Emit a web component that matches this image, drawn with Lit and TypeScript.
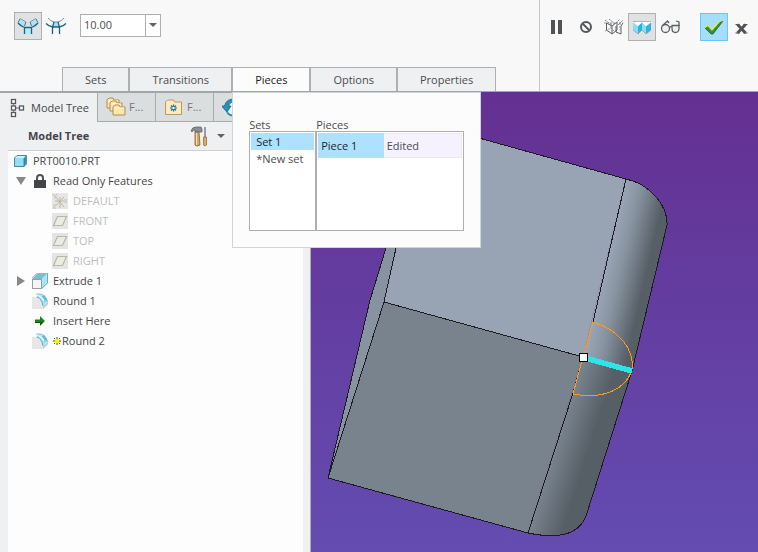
import { LitElement, html, css, svg, nothing } from "lit";
import type { TemplateResult } from "lit";
import { customElement, state } from "lit/decorators.js";
import { classMap } from "lit/directives/class-map.js";

const icon = (size: number, body: unknown, width = size) =>
  html`<svg class="icon" width=${width} height=${size} viewBox="0 0 ${width} ${size}" aria-hidden="true">${body}</svg>`;

/* Toolbar glyphs, 26 x 26 */
const setMode = icon(26, svg`
  <path d="M5 7 L11 9.500 L8.500 13.500 L3.500 10 Z M21 7 L15 9.500 L17.500 13.500 L22.500 10 Z" fill="#a5e3f7"/>
  <rect x="9" y="14" width="8" height="7" fill="#b4ebfa"/>
  <path d="M5 5.500 L11 9 M21 5.500 L15 9" stroke="#7e9aa6" fill="none"/>
  <path d="M3 9.500 L5 6 M23 9.500 L21 6 M11 9 L9.500 13 M15 9 L16.500 13" stroke="#2c7e9b" fill="none"/>
  <path d="M3 10 Q5.500 13 9.500 14.500 H16.500 Q20.500 13 23 10 M9.500 14 V21 M16.500 14 V21" stroke="#1b6380" stroke-width="1.300" fill="none"/>`);
const transitionMode = icon(26, svg`
  <path d="M11 9 H15 L17 14 H9 Z" fill="#a5e3f7"/>
  <path d="M5 5 Q8 8.500 11 9 H15 Q18 8.500 21 5" stroke="#6f94a3" fill="none"/>
  <path d="M3 10.500 Q6 13.500 9.500 14 H16.500 Q20 13.500 23 10.500 M11 9 L9.500 14 V21 M15 9 L16.500 14 V21" stroke="#1b6380" stroke-width="1.300" fill="none"/>`);
const pause = icon(26, svg`<path d="M6 6h4v14H6z M13 6h4v14h-4z" fill="#505356"/>`);
const noPreview = icon(26, svg`
  <circle cx="13" cy="13" r="5" fill="none" stroke="#55585b" stroke-width="2"/>
  <path d="M9.500 9.500 L16.500 16.500" stroke="#55585b" stroke-width="2"/>`);
const wire = icon(26, svg`
  <g fill="none" stroke="#5b5e61">
    <path d="M5.500 9 L11 12 V20 L5.500 16 Z M11 12 L16 8 V16 L11 20 M15 12 V18 L20 20 V12 L22 9"/>
    <path d="M3 9 H22 M4 17 L10 14 L14 18 M10 9 V14 M19 9 V16" stroke-dasharray="2 1" stroke="#94979a"/>
    <path d="M4 6 L12 12 M8 5 L14 10 L19 5 M15 13 L22 6" stroke-dasharray="2 1" stroke="#7c7f82"/>
  </g>`);
const shaded = icon(26, svg`
  <path d="M5 9 L8 7 H13 L9 12 Z M13 9 L16 7 H22 L18 12 Z" fill="#fff"/>
  <path d="M4 8 L9 12 V20 L4 16 Z" fill="#8adcf7"/><path d="M9 12 L13 8 V16 L9 20 Z" fill="#2cb2e6"/>
  <path d="M13 8 L17 12 V20 L13 16 Z" fill="#8adcf7"/><path d="M17 12 L22 8 V16 L17 20 Z" fill="#2cb2e6"/>
  <path d="M4 7.500 H22 M4 16 L9 20 L13 16 L17 20 L22 16" stroke="#8b999f" fill="none" stroke-width=".7"/>
  <path d="M4 8 L9 12 L13 8 L17 12 L22 8" stroke="#e9f8fd" fill="none"/>`);
const glasses = icon(26, svg`
  <g fill="#eef1f2" stroke="#5d6063" stroke-width="1.300">
    <circle cx="8.500" cy="14.500" r="4"/><path d="M15 11.500 H22 V15 Q21.500 18.500 18.500 18.500 Q15 18.500 15 14.500 Z"/>
    <path d="M5 12 L10.500 7 L12 9 M12.500 13.500 Q13.500 12 15 13 M22 12 V8 L19 7" fill="none"/>
  </g>`);
const check = icon(26, svg`
  <path d="M4 14 L7 12 L11 17 L19 8 L22 7 L12 20 H10 Z" fill="#2f8f4e" stroke="#235c33" stroke-width=".8"/>
  <path d="M4 13.500 L7 11.500 L11 16 L18.500 7.500 L22 6.500" fill="none" stroke="#e4f01c" stroke-width="1.200"/>`);
const cancel = icon(26, svg`
  <path d="M8.500 10.500 L16.500 19 M16.500 10.500 L8.500 19" stroke="#505356" stroke-width="3"/>
  <path d="M6.500 10.500h4 M14.500 10.500h4 M6.500 19h4 M14.500 19h4" stroke="#505356"/>`);
const caret = icon(4, svg`<path d="M0 0h8L4 4z" fill="#606366"/>`, 8);

/* Navigator tab glyphs */
const treeTab = icon(20, svg`
  <g fill="#fff" stroke="#55585b" stroke-width="1.300"><path d="M3.500 5v10M3.500 10h7" stroke="#8c8f92"/>
  <rect x="1.500" y="1.500" width="4" height="4"/><rect x="1.500" y="8" width="4" height="4"/>
  <rect x="1.500" y="14.500" width="4" height="4"/><rect x="9.500" y="8" width="4" height="4"/></g>`, 16);
const folderShape = (x: number, y: number) => svg`
  <path d="M${x} ${y + 10}v-8q0-1 1-1l1-1h4l1 2h5v8z" fill="#fbe6ae" stroke="#b28c4e"/>
  <path d="M${x + 1} ${y + 3}h10" stroke="#fff8e0"/>`;
const folders = icon(20, svg`${folderShape(1, 1)}${folderShape(4, 4)}${folderShape(7, 8)}`);
const favorite = icon(20, svg`
  <path d="M1.500 17.500V5l1-1 1-1h6l1 2h7v12.500z" fill="#fcebc0" stroke="#b99a5f"/>
  <path d="M9.500 7.500v7M6 11h7M7 8.500l5 5M12 8.500l-5 5" stroke="#1d6c8b" stroke-width="1.200"/><circle cx="9.500" cy="11" r="1.200" fill="#fff"/>`);
const history = icon(20, svg`
  <circle cx="11" cy="10" r="7" fill="#f4f9fb"/>
  <path d="M15 2 Q4 1 2.500 9 L-.5 9 L5 15 L9 9 L6.500 9 Q8 4 15 5 Z" fill="#2791c0" stroke="#145f80" stroke-width=".8"/>
  <path d="M5 15 Q8 20 15 18" fill="none" stroke="#2787b0" stroke-width="1.500"/>`);
const tools = icon(22, svg`
  <path d="M1 6 Q2 2 6 2 H11 L12 4 V7 H5 V5 Q3 5 2 7 Z" fill="#8b8f94" stroke="#595c60" stroke-width=".7"/>
  <path d="M5 7h4l1 13q-3 2-5 0z" fill="#d6a766" stroke="#7a5a32" stroke-width=".8"/><path d="M6.500 8v12" stroke="#f6ddb0"/>
  <path d="M15 2v10" stroke="#7c8084" stroke-width="1.500"/>
  <path d="M13.500 12h3v8q-1.500 2-3 0z" fill="#e0ac63" stroke="#84602e" stroke-width=".7"/>`, 18);

/* Model tree glyphs, 16 x 16 */
const part = icon(16, svg`
  <path d="M2 5 L5 2 H14 L12 5 Z" fill="#c6f1fd"/><path d="M12 5 L14 2 V11 L12 14 Z" fill="#2b97c0"/>
  <rect x="2" y="5" width="10" height="9" fill="#93def6"/>
  <path d="M2.500 5 L5 2.500 H14.500 V11 L12 13.500 H2.500 Z M12 5 V13" fill="none" stroke="#33718b" stroke-width=".8"/>`);
const lock = icon(16, svg`
  <path d="M5 7V5q0-3 3-3t3 3v2" fill="none" stroke="#4f5255" stroke-width="2"/>
  <path d="M2 7h12v8H2z" fill="#434649"/>`);
const csys = icon(16, svg`
  <rect width="16" height="16" fill="#e6e6e6"/>
  <path d="M8 4v11M3 8h9M3.500 13L12 4M4 4L12 14" stroke="#bbb8a4" fill="none"/>
  <path d="M1 1l2 3 2-3M3 4v2M12 6l3 4M15 6l-3 4M1 12h3l-3 3h3" stroke="#c6c3b2" fill="none"/>`);
const plane = icon(16, svg`
  <rect width="16" height="16" fill="#e4e4e4"/>
  <path d="M1.500 12.500 L5.500 3.500 H14.500 L10.500 12.500 Z" fill="#ebebe6" stroke="#b9b7a6" stroke-width="1.200"/>`);
const extrude = icon(16, svg`
  <path d="M0 6 L6 0 H16 L10 6 Z" fill="#7fbcd4"/><path d="M10 6 L16 0 V10 L10 16 Z" fill="#a8e5f8"/>
  <path d="M0 5 L5 0 H15" stroke="#b4b9bc" fill="none"/><path d="M10 15 L15.500 10 V0" stroke="#71a9bd" fill="none"/>
  <rect x=".5" y="6.500" width="9" height="9" fill="#f5f5f5" stroke="#9b9ea1"/>`);
const round = icon(16, svg`
  <path d="M0 4 H4 Q11 6 11 16 H0 Z" fill="#e6e6e6"/>
  <path d="M11 14 L16 9 V11 L11 16 Z" fill="#bfc2c4"/>
  <path d="M4 4 L7 1 Q14 1 16 9 L11 14 Q10 5 4 4 Z" fill="#a9e6fa"/>
  <path d="M9 4 L12 2 Q14 4 15 7 L12 9 Q11 6 9 4 Z" fill="#5cc0e6"/><path d="M7 3 Q10 4 12 8" stroke="#e9fbff" stroke-width="1.500" fill="none"/>
  <path d="M5 4 Q10 5.500 11 13" stroke="#63a9c4" fill="none"/><path d="M4 1 H8 Q14 1.500 15.500 9" stroke="#7cb3c8" stroke-width=".8" fill="none"/>`);
const insertArrow = icon(16, svg`
  <path d="M3 6.500 H8 V3 L13 8 L8 13 V10 H3 Z" fill="#12861a"/><path d="M3 9 H12 L8 13 V10 H3 Z" fill="#1d4f16"/>
  <path d="M8 13 L13 8" stroke="#c9d414" stroke-width=".8"/>`);
const fresh = icon(8, svg`
  <path d="M4 0v8M0 4h8M1 1l6 6M7 1L1 7" stroke="#4c4c14" /><rect x="2" y="2" width="4" height="4" fill="#fff200"/>`);

interface Node {
  label: string;
  glyph: TemplateResult;
  open?: boolean;
  dim?: boolean;
  isNew?: boolean;
  children?: Node[];
}

const features: Node[] = [
  { label: "Read Only Features", glyph: lock, open: true, children: [
    { label: "DEFAULT", glyph: csys, dim: true },
    { label: "FRONT", glyph: plane, dim: true },
    { label: "TOP", glyph: plane, dim: true },
    { label: "RIGHT", glyph: plane, dim: true },
  ] },
  { label: "Extrude 1", glyph: extrude, open: false },
  { label: "Round 1", glyph: round },
  { label: "Insert Here", glyph: insertArrow },
  { label: "Round 2", glyph: round, isNew: true },
];

const controls = css`
  * { box-sizing: border-box; }
  button, input { font: inherit; color: inherit; margin: 0; padding: 0; border: 0; background: none; border-radius: 0; }
  button { cursor: default; }
  .icon { display: block; flex: none; }
`;

@customElement("pieces-panel")
export class PiecesPanel extends LitElement {
  static styles = [controls, css`
    :host { display: block; border: 1px solid #cfd4d5; background: #fcfcfc; padding: 24px 16px 16px; text-align: left; color: #4c4c50; }
    .columns { display: grid; grid-template-columns: 67px 148px; }
    .label { line-height: 15px; height: 14px; }
    .box { height: 100px; border: 1px solid #adafb0; background: #fff; padding: 1px; }
    .option { display: block; width: 100%; height: 17px; line-height: 17px; padding-left: 5px; text-align: left; }
    .option.selected { background: #ade1fe; color: #24242c; }
    table { width: 100%; border-collapse: collapse; }
    td { height: 24px; padding: 0 3px; background: #f5f1fe; border: 1px solid #ebeaf2; border-left: 0; }
    td.selected { background: #ade1fe; border-color: #ade1fe; color: #24242c; width: 65px; }
  `];
  @state() private selected = "Set 1";

  render() {
    return html`<div class="columns">
      <div class="label" id="sets">Sets</div><div class="label" id="pieces">Pieces</div>
      <div class="box" role="listbox" aria-labelledby="sets">
        ${["Set 1", "*New set"].map((name) => html`<button role="option"
          class=${classMap({ option: true, selected: name === this.selected })}
          aria-selected=${name === this.selected} @click=${() => (this.selected = name)}>${name}</button>`)}
      </div>
      <div class="box"><table aria-labelledby="pieces"><tr><td class="selected">Piece 1</td><td>Edited</td></tr></table></div>
    </div>`;
  }
}

@customElement("model-tree")
export class ModelTree extends LitElement {
  static styles = [controls, css`
    :host { display: flex; flex-direction: column; color: #454548; background: #eff0f2; border-top: 1px solid #a3a6a8; border-right: 1px solid #adafb1; }
    .tabs { display: flex; height: 29px; overflow: hidden; }
    .tab { display: flex; flex: none; align-items: center; gap: 3px; width: 58px; padding-left: 8px; background: #dbdedf; border-left: 1px solid #a9acae; border-bottom: 1px solid #a9acae; color: #77727e; }
    .tab.active { width: 97px; padding-left: 10px; gap: 5px; background: #eff0f2; border: 0; color: #454548; }
    .fill { flex: 1; background: #dbdedf; border-bottom: 1px solid #a9acae; }
    .title { display: flex; align-items: center; height: 28px; padding: 0 85px 0 28px; }
    h2 { flex: 1; margin: 0; font-size: 11px; line-height: 16px; }
    .menu { display: flex; align-items: center; gap: 9px; }
    .tree { flex: 1; margin: 0 7px 0 8px; border-top: 1px solid #ced2d3; background: #fdfdfd; }
    ul { list-style: none; margin: 0; padding: 0; }
    .row { display: flex; align-items: center; height: 20px; gap: 5px; padding-left: 7px; }
    .root { padding-left: 4px; }
    .leaf { padding-left: 44px; }
    .twisty { display: flex; justify-content: center; align-items: center; width: 12px; height: 12px; }
    .name { display: flex; align-items: center; gap: 1px; white-space: nowrap; }
    .dim { color: #bdbdbf; }
  `];
  @state() private active = 0;

  private twisty(node: Node) {
    if (node.open === undefined) return html`<span class="twisty"></span>`;
    return html`<button class="twisty" aria-label="Toggle ${node.label}">${icon(10, node.open
      ? svg`<path d="M0 1h10L5 9z" fill="#85878a"/>` : svg`<path d="M1 0v10l8-5z" fill="#85878a"/>`)}</button>`;
  }

  private item(node: Node, leaf = false): TemplateResult {
    return html`<li>
      <div class=${classMap({ row: true, leaf })}>
        ${leaf ? nothing : this.twisty(node)}${node.glyph}
        <span class=${classMap({ name: true, dim: !!node.dim })}>${node.isNew ? fresh : nothing}<span>${node.label}</span></span>
      </div>
      ${node.children ? html`<ul>${node.children.map((c) => this.item(c, true))}</ul>` : nothing}
    </li>`;
  }

  render() {
    const tabs = [
      { glyph: treeTab, text: "Model Tree" }, { glyph: folders, text: "F..." },
      { glyph: favorite, text: "F..." }, { glyph: history, text: "" },
    ];
    return html`
      <div class="tabs" role="tablist">
        ${tabs.map((t, i) => html`<button role="tab" aria-label=${t.text || "History"} aria-selected=${i === this.active}
          class=${classMap({ tab: true, active: i === this.active })}>${t.glyph}<span>${t.text}</span></button>`)}
        <div class="fill"></div>
      </div>
      <div class="title"><h2>Model Tree</h2><button class="menu" aria-label="Tree settings">${tools}${caret}</button></div>
      <div class="tree">
        <div class="row root">${part}<span>PRT0010.PRT</span></div>
        <ul>${features.map((f) => this.item(f))}</ul>
      </div>`;
  }
}

@customElement("model-view")
export class ModelView extends LitElement {
  static styles = css`
    :host { display: block; overflow: hidden; background: linear-gradient(#643092, #644cb1); }
    svg { display: block; width: 100%; height: 100%; }
    .edge { fill: none; stroke: #1c1c20; shape-rendering: crispEdges; }
    .preview { fill: none; stroke: #ff9a14; shape-rendering: crispEdges; }
  `;
  render() {
    return html`<svg viewBox="311 92 447 460" preserveAspectRatio="xMinYMin meet" role="img" aria-label="Part with a rounded edge">
      <defs>
        <linearGradient id="upper" gradientUnits="userSpaceOnUse" x1="611" y1="250" x2="650" y2="259">
          <stop offset="0" stop-color="#98a3b3"/><stop offset=".35" stop-color="#8794a0"/><stop offset=".7" stop-color="#6e7882"/><stop offset="1" stop-color="#565e66"/>
        </linearGradient>
        <linearGradient id="lower" gradientUnits="userSpaceOnUse" x1="555" y1="450" x2="586" y2="460">
          <stop offset="0" stop-color="#78838e"/><stop offset="1" stop-color="#565e66"/>
        </linearGradient>
      </defs>
      <path d="M425 123 L384 302 L328 478 L370 300 L386 248 Z" fill="#8793a0"/>
      <path d="M425 123 L626 179 L583 357 L384 302 Z" fill="#98a3b3"/>
      <path d="M384 302 L583 357 L528 533 L328 478 Z" fill="#78838e"/>
      <path d="M626 179 C650 184 668 206 667 225 L632 371 L583 357 Z" fill="url(#upper)"/>
      <path d="M583 357 L632 371 L586 516 C580 532 562 540 528 533 Z" fill="url(#lower)"/>
      <path class="edge" d="M425 123 L626 179 C650 184 668 206 667 225 L632 371 L586 516 C580 532 562 540 528 533 L328 478 L370 300 L386 248 L425 123 M396 248 L384 302 L328 478 M384 302 L583 357 M626 179 L593 322 L583 357 L573 393 L528 533"/>
      <path class="preview" d="M583 357 L593 322 C617 329 635 348 632 370 C626 388 606 400 573 394 Z"/>
      <path d="M587 358.500 L632 371" stroke="#2de4e6" stroke-width="5.500" shape-rendering="crispEdges"/>
      <rect x="579.500" y="353.500" width="8" height="8" fill="#fff" stroke="#000"/>
    </svg>`;
  }
}

@customElement("app-root")
export class AppRoot extends LitElement {
  static styles = [controls, css`
    :host { display: flex; flex-direction: column; min-height: 100vh; font: 11px/16px "Open Sans", "Noto Sans", sans-serif; color: #4c4c50; background: #f8f8f8; }
    header { display: flex; border-bottom: 1px solid #a3a6a8; position: relative; z-index: 1; }
    .dashboard { flex: 1; display: flex; flex-direction: column; border-right: 1px solid #c4c6c7; }
    .tools { display: flex; align-items: center; padding: 12px 14px 0; }
    .tool { display: block; width: 28px; height: 28px; border: 1px solid transparent; }
    .pressed { background: #e0e1e3; border-color: #adafb1; }
    .radius { display: flex; width: 81px; height: 23px; margin: 0 0 2px 10px; border: 1px solid #adafb1; background: #fff; }
    .radius input { flex: 1; min-width: 0; padding-left: 3px; }
    .drop { display: flex; align-items: center; justify-content: center; width: 15px; border-left: 1px solid #adafb1; }
    .tabs { display: flex; margin-top: 27px; padding-left: 62px; }
    .slot { position: relative; display: flex; }
    .tab { height: 24px; padding: 0 22px; border: 1px solid #adafb1; border-bottom: 0; background: #eff0f2; }
    .tab.active { background: #fcfcfc; color: #18181c; }
    .popup { position: absolute; top: 100%; left: 0; margin-top: 1px; }
    .actions { display: flex; flex: 0 0 218px; padding: 13px 0 0 4px; }
    .accept { margin-left: 16px; background: #a3defe; border-color: #6cc6f5; }
    main { flex: 1; display: flex; }
    model-tree { flex: 0 0 311px; box-sizing: border-box; }
    model-view { flex: 1; min-width: 0; }
  `];
  @state() private tab = "Pieces";

  render() {
    return html`
      <header>
        <div class="dashboard">
          <div class="tools">
            <button class="tool pressed" aria-label="Set mode">${setMode}</button>
            <button class="tool" aria-label="Transition mode">${transitionMode}</button>
            <div class="radius"><input aria-label="Radius" value="10.00" /><button class="drop" aria-label="Recent values">${caret}</button></div>
          </div>
          <div class="tabs" role="tablist">
            ${["Sets", "Transitions", "Pieces", "Options", "Properties"].map((name) => html`<div class="slot">
              <button role="tab" aria-selected=${name === this.tab} class=${classMap({ tab: true, active: name === this.tab })}
                @click=${() => (this.tab = name)}>${name}</button>
              ${name === "Pieces" && this.tab === name ? html`<pieces-panel class="popup"></pieces-panel>` : nothing}
            </div>`)}
          </div>
        </div>
        <div class="actions">
          <button class="tool" aria-label="Pause">${pause}</button>
          <button class="tool" aria-label="No preview">${noPreview}</button>
          <button class="tool" aria-label="Unattached preview">${wire}</button>
          <button class="tool pressed" aria-label="Attached preview">${shaded}</button>
          <button class="tool" aria-label="Verify">${glasses}</button>
          <button class="tool accept" aria-label="OK">${check}</button>
          <button class="tool" aria-label="Cancel">${cancel}</button>
        </div>
      </header>
      <main><model-tree></model-tree><model-view></model-view></main>`;
  }
}
